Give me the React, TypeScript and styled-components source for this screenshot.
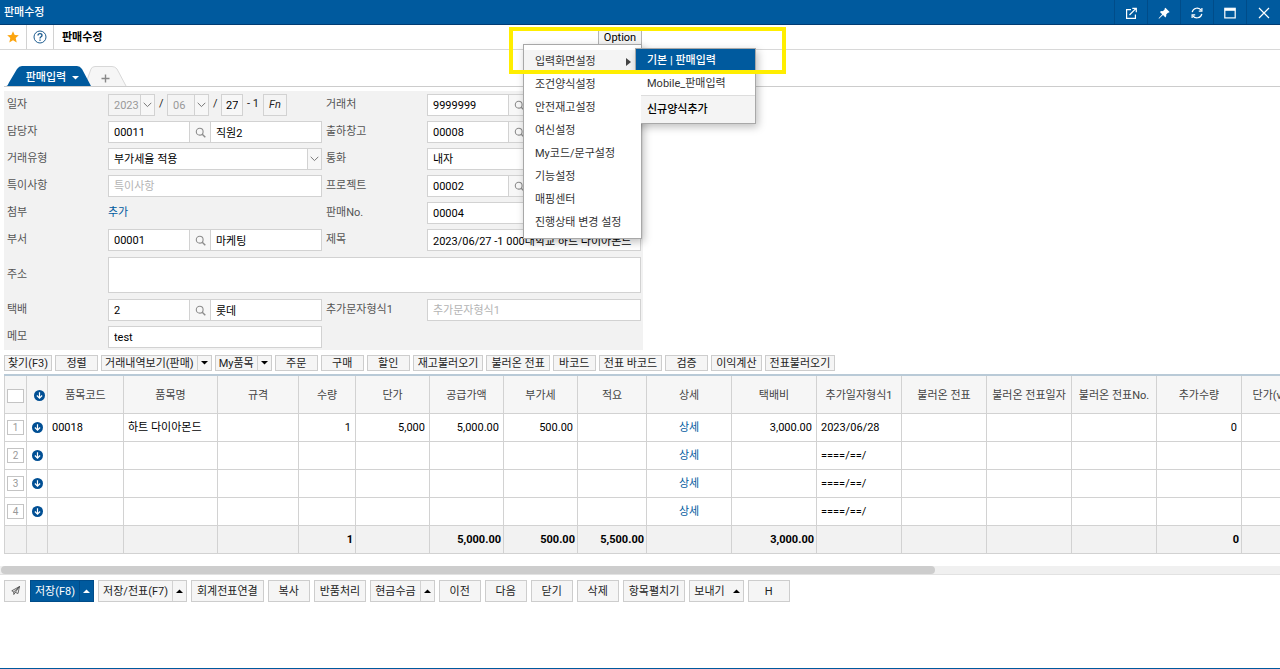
import React from 'react';
import styled, { createGlobalStyle, css } from 'styled-components';

const blue = '#005a9e';
const line = '#d2d2d2';

const GlobalStyle = createGlobalStyle`
  *, *::before, *::after { box-sizing: border-box; }
  body { margin: 0; background: #fff; }
  body, button, input, select, textarea {
    font-family: Roboto, 'Noto Sans CJK KR', sans-serif;
    font-size: 11px;
    line-height: 16px;
    color: #222;
  }
  button { margin: 0; padding: 0; cursor: pointer; }
  a { color: ${blue}; text-decoration: none; }
`;

const Page = styled.div`
  display: flex;
  flex-direction: column;
  min-height: 100vh;
  overflow: hidden;
  border-bottom: 1px solid ${blue};
`;

const TitleBar = styled.header`
  display: flex;
  align-items: center;
  justify-content: space-between;
  height: 25px;
  padding-left: 4px;
  background: ${blue};
  border-bottom: 1px solid #003c73;
  color: #fff;
  font-weight: 500;
`;

const WindowTitle = styled.span`
  padding-top: 1px;
`;

const WindowButtons = styled.div`
  display: flex;
  height: 100%;
`;

const WindowButton = styled.button`
  display: flex;
  align-items: center;
  justify-content: center;
  width: 33px;
  padding-top: 2px;
  border: 0;
  border-left: 1px solid #004c89;
  background: transparent;
  color: #fff;
  &:last-child { width: 34px; }
`;

const PageBar = styled.div`
  height: 25px;
  border-bottom: 1px solid #d8d8d8;
`;

const PageBarInner = styled.div`
  display: flex;
  align-items: stretch;
  width: 642px;
  height: 24px;
`;

const PageIcon = styled.button`
  display: flex;
  align-items: center;
  justify-content: center;
  width: 27px;
  border: 0;
  border-right: 1px solid ${line};
  background: transparent;
`;

const PageTitle = styled.h1`
  flex: 1;
  margin: 0;
  padding: 2px 0 0 8px;
  font-size: 11px;
  line-height: 22px;
  font-weight: 700;
  color: #000;
`;

const OptionHolder = styled.div`
  position: relative;
  padding-top: 5px;
`;

const OptionButton = styled.button`
  width: 44px;
  height: 15px;
  padding-top: 1px;
  border: 1px solid #b4b4b4;
  border-top-color: #e0e0e0;
  background: #f5f5f5;
  line-height: 12px;
  color: #000;
`;

const popup = css`
  position: absolute;
  border: 1px solid #a8a8a8;
  background: #fff;
  box-shadow: 2px 3px 8px rgba(0, 0, 0, 0.25);
  margin: 0;
  list-style: none;
`;

const Menu = styled.ul`
  ${popup}
  z-index: 2;
  top: 19px;
  right: 0;
  width: 119px;
  padding: 5px 0 4px;
`;

const SubMenu = styled.ul`
  ${popup}
  top: -2px;
  left: 111px;
  width: 121px;
  padding: 0;
`;

const MenuItem = styled.li<{ $open?: boolean }>`
  position: relative;
  background: ${(p) => (p.$open ? '#f4f4f4' : '#fff')};
`;

const MenuButton = styled.button<{ $kind?: 'active' | 'footer' }>`
  display: flex;
  align-items: center;
  justify-content: space-between;
  width: 100%;
  height: ${(p) => (p.$kind === 'footer' ? '28px' : '23px')};
  padding: 0 10px 0 11px;
  border: 0;
  background: transparent;
  color: #333;
  ${(p) => p.$kind === 'active' && css`background: ${blue}; color: #fff; font-weight: 500;`}
  ${(p) => p.$kind === 'footer' && css`border-top: 1px solid #ddd; background: #f4f4f4; color: #000; font-weight: 500;`}
`;

const Highlight = styled.div`
  position: absolute;
  z-index: 3;
  top: 2px;
  right: -144px;
  width: 277px;
  height: 47px;
  border: 4px solid #ffee00;
  pointer-events: none;
`;

const TabBar = styled.nav`
  display: flex;
  align-items: flex-end;
  height: 37px;
  margin: 0 0 4px 4px;
  padding-left: 2px;
  border-bottom: 1px solid #ccc;
`;

const Tab = styled.button<{ $active?: boolean }>`
  position: relative;
  display: flex;
  align-items: center;
  justify-content: center;
  gap: 6px;
  width: ${(p) => (p.$active ? '85px' : '44px')};
  height: 20px;
  margin-left: ${(p) => (p.$active ? '0' : '-8px')};
  padding: 4px 0 0 ${(p) => (p.$active ? '8px' : '0')};
  z-index: ${(p) => (p.$active ? 1 : 0)};
  border: 0;
  background: transparent;
  color: ${(p) => (p.$active ? '#fff' : '#888')};
  font-weight: ${(p) => (p.$active ? 500 : 400)};
`;

const TabShape = styled.svg`
  position: absolute;
  inset: 0;
  z-index: -1;
`;

const FormPanel = styled.form`
  display: grid;
  grid-template-columns: 101px 214px 105px 214px;
  row-gap: 5px;
  width: fit-content;
  margin-left: 4px;
  padding: 3px 2px 2px 3px;
  background: #f2f2f2;
`;

const Label = styled.label<{ $second?: boolean }>`
  align-self: center;
  padding-left: ${(p) => (p.$second ? '4px' : '0')};
  color: #555;
`;

const control = css`
  height: 22px;
  min-width: 0;
  border: 1px solid ${line};
  border-radius: 0;
  background: #fff;
  color: #000;
  padding: 0 5px;
  outline: 0;
`;

const TextInput = styled.input`
  ${control}
  width: 100%;
  &::placeholder { color: #b4b4b4; }
`;

const Address = styled.textarea`
  ${control}
  grid-column: span 3;
  height: 36px;
  margin: 1px 0;
  resize: none;
`;

const LookupBox = styled.div`
  display: grid;
  grid-template-columns: 82px 20px 1fr;
`;

const LookupButton = styled.button`
  display: flex;
  align-items: center;
  justify-content: center;
  border: 1px solid ${line};
  border-width: 1px 0;
  background: #f7f7f7;
`;

const SelectBox = styled.div<{ $width?: number; $muted?: boolean }>`
  position: relative;
  width: ${(p) => (p.$width ? `${p.$width}px` : '100%')};
  select {
    ${control}
    appearance: none;
    width: 100%;
    padding-top: 2px;
    opacity: 1;
    background: ${(p) => (p.$muted ? '#f4f4f4' : '#fff')};
    color: ${(p) => (p.$muted ? '#999' : '#000')};
  }
`;

const SelectArrow = styled.span`
  position: absolute;
  top: 1px;
  right: 1px;
  bottom: 1px;
  width: 14px;
  display: flex;
  align-items: center;
  justify-content: center;
  border-left: 1px solid ${line};
  background: #f7f7f7;
  pointer-events: none;
`;

const DateBox = styled.div`
  display: flex;
  gap: 4px;
`;

const DateMark = styled.span`
  width: 4px;
  padding-top: 2px;
  text-align: center;
`;

const DateSerial = styled.span`
  padding-top: 2px;
`;

const DayInput = styled.input`
  ${control}
  width: 22px;
  padding: 0 4px;
  background: #f7f7f7;
`;

const FnButton = styled.button`
  width: 24px;
  height: 22px;
  border: 1px solid ${line};
  background: #f4f4f4;
  font-style: italic;
`;

const AddLink = styled.a`
  align-self: center;
`;

const ToolRow = styled.div<{ $tall?: boolean }>`
  display: flex;
  gap: ${(p) => (p.$tall ? '4px' : '3px')};
  margin: ${(p) => (p.$tall ? '5px 0 0 4px' : '5px 0 3px 4px')};
`;

const ToolGroup = styled.div<{ $tall?: boolean; $primary?: boolean }>`
  display: flex;
  height: ${(p) => (p.$tall ? '22px' : '16px')};
  border: 1px solid ${(p) => (p.$primary ? '#004c89' : '#cdcdcd')};
  background: ${(p) => (p.$primary ? blue : '#f5f5f5')};
`;

const ToolButton = styled.button<{ $tall?: boolean; $primary?: boolean; $tight?: boolean }>`
  min-width: ${(p) => (p.$tight ? '0' : p.$tall ? '40px' : '41px')};
  padding: 1px ${(p) => (p.$tall ? (p.$tight ? '4px' : '5px') : p.$tight ? '3px' : '4px')} 0;
  border: 0;
  background: transparent;
  line-height: 13px;
  white-space: nowrap;
  color: ${(p) => (p.$primary ? '#fff' : '#222')};
`;

const ArrowButton = styled.button<{ $primary?: boolean; $plain?: boolean }>`
  display: flex;
  align-items: center;
  justify-content: center;
  width: 14px;
  border: 0;
  border-left: 1px solid ${(p) => (p.$plain ? 'transparent' : p.$primary ? '#004c89' : line)};
  background: transparent;
`;

const SendButton = styled.button`
  display: flex;
  align-items: center;
  justify-content: center;
  width: 20px;
  border: 0;
  background: transparent;
`;

const GridArea = styled.div`
  margin-left: 4px;
  overflow: hidden;
`;

const Grid = styled.table`
  table-layout: fixed;
  width: 0;
  border-collapse: collapse;
  th, td {
    height: 28px;
    padding: 2px 4px 0;
    border: 1px solid ${line};
    font-weight: 400;
    white-space: nowrap;
    color: #000;
  }
  thead th {
    height: 38px;
    padding: 3px 0 0;
    border-top: 2px solid #b9cad7;
    background: #f6f6f6;
    color: #444;
  }
  tfoot td {
    background: #f2f2f2;
    padding: 1px 2px 0;
    font-weight: 700;
  }
`;

const Cell = styled.td<{ $align?: 'left' | 'right' | 'center' }>`
  text-align: ${(p) => p.$align ?? 'left'};
`;

const IconCell = styled.td`
  && { padding: 0 2px; }
  line-height: 0;
`;

const SelectAll = styled.input`
  appearance: none;
  display: block;
  width: 17px;
  height: 14px;
  margin: 0 0 0 2px;
  border: 1px solid #c4c4c4;
  background: #fff;
`;

const RowNumber = styled.button`
  display: block;
  width: 17px;
  height: 15px;
  border: 1px solid #c4c4c4;
  background: #fff;
  font-size: 10px;
  line-height: 13px;
  color: #999;
`;

const RoundButton = styled.button<{ $header?: boolean }>`
  display: flex;
  justify-content: center;
  width: 16px;
  margin-left: ${(p) => (p.$header ? 'auto' : '0')};
  border: 0;
  background: transparent;
`;

const ScrollTrack = styled.div`
  height: 9px;
  margin-top: 12px;
  border-bottom: 1px solid #e2e2e2;
  background: #f0f0f0;
`;

const ScrollThumb = styled.div`
  width: 73%;
  height: 8px;
  margin-left: 1px;
  border-radius: 4px;
  background: #cdcdcd;
`;

const Search = () => (
  <svg width="11" height="11" viewBox="0 0 11 11" fill="none" stroke="#8c8c8c" strokeWidth="1.1">
    <circle cx="4.7" cy="4.7" r="3.4" />
    <path d="M7.2 7.2 10.3 10.3" strokeWidth="1.4" />
  </svg>
);

const Chevron = () => (
  <svg width="9" height="6" viewBox="0 0 9 6" fill="none" stroke="#777" strokeWidth="1">
    <path d="M.7.8 4.5 4.6 8.3.8" />
  </svg>
);

const Triangle = ({ up, color = '#000' }: { up?: boolean; color?: string }) => (
  <svg width="7" height="4" viewBox="0 0 7 4" fill={color}>
    <path d={up ? 'M0 4 3.5 .5 7 4Z' : 'M0 0H7L3.5 3.5Z'} />
  </svg>
);

const DownCircle = () => (
  <svg width="11" height="11" viewBox="0 0 11 11">
    <circle cx="5.5" cy="5.5" r="5.5" fill="#004f94" />
    <path d="M5.5 2.2V8M2.9 5.5 5.5 8.1 8.1 5.5" fill="none" stroke="#fff" strokeWidth="1.2" />
  </svg>
);

const windowIcons: { name: string; icon: React.ReactNode }[] = [
  {
    name: '새 창',
    icon: (
      <g fill="none" stroke="currentColor" strokeWidth="1.2">
        <path d="M6 2.6H1.6V11.4H10.4V7.5" />
        <path d="M4.5 8 10.8 1.7M7.3 1.3H11.3V5.3" />
      </g>
    ),
  },
  {
    name: '고정',
    icon: (
      <path
        d="M7.4.8 11.6 5 10.8 5.8 10.2 5.6 8.2 7.6C8.5 8.8 8.2 9.8 7.4 10.4L5 8 1 11.7.6 11.3 4.2 7.2 1.9 4.9C2.7 4.1 3.7 3.9 4.8 4.2L6.8 2.2 6.6 1.6Z"
        fill="currentColor"
      />
    ),
  },
  {
    name: '새로고침',
    icon: (
      <g fill="none" stroke="currentColor" strokeWidth="1.2">
        <path d="M1.2 5.2A5 5 0 0 1 10.3 3.4M10.8 6.8A5 5 0 0 1 1.7 8.6" />
        <path d="M10.9.9V4.1H7.8M1.1 11.1V7.9H4.2" />
      </g>
    ),
  },
  {
    name: '최대화',
    icon: (
      <g fill="none" stroke="currentColor" strokeWidth="1.2">
        <rect x=".8" y="1.3" width="10.4" height="9.6" />
        <path d="M.8 2.6H11.2" strokeWidth="2.4" />
      </g>
    ),
  },
  {
    name: '닫기',
    icon: <path d="M1 1 11 11M11 1 1 11" fill="none" stroke="currentColor" strokeWidth="1.2" />,
  },
];

const menuItems = ['조건양식설정', '안전재고설정', '여신설정', 'My코드/문구설정', '기능설정', '매핑센터', '진행상태 변경 설정'];

const gridTools: { text: string; arrow?: boolean; tight?: boolean }[] = [
  { text: '찾기(F3)', tight: true },
  { text: '정렬' },
  { text: '거래내역보기(판매)', arrow: true },
  { text: 'My품목', arrow: true },
  { text: '주문' },
  { text: '구매' },
  { text: '할인' },
  { text: '재고불러오기' },
  { text: '불러온 전표' },
  { text: '바코드' },
  { text: '전표 바코드' },
  { text: '검증' },
  { text: '이익계산' },
  { text: '전표불러오기' },
];

const actions: { text: string; arrow?: boolean; primary?: boolean; plain?: boolean }[] = [
  { text: '저장(F8)', arrow: true, primary: true },
  { text: '저장/전표(F7)', arrow: true },
  { text: '회계전표연결' },
  { text: '복사' },
  { text: '반품처리' },
  { text: '현금수금', arrow: true },
  { text: '이전' },
  { text: '다음' },
  { text: '닫기' },
  { text: '삭제' },
  { text: '항목펼치기' },
  { text: '보내기', arrow: true, plain: true },
  { text: 'H' },
];

type Column = { title: string; width: number; align?: 'right' | 'center'; total?: string };

const columns: Column[] = [
  { title: '품목코드', width: 76 },
  { title: '품목명', width: 94 },
  { title: '규격', width: 81 },
  { title: '수량', width: 57, align: 'right', total: '1' },
  { title: '단가', width: 74, align: 'right' },
  { title: '공급가액', width: 74, align: 'right', total: '5,000.00' },
  { title: '부가세', width: 74, align: 'right', total: '500.00' },
  { title: '적요', width: 69, total: '5,500.00' },
  { title: '상세', width: 85, align: 'center' },
  { title: '택배비', width: 85, align: 'right', total: '3,000.00' },
  { title: '추가일자형식1', width: 85 },
  { title: '불러온 전표', width: 85 },
  { title: '불러온 전표일자', width: 85 },
  { title: '불러온 전표No.', width: 85 },
  { title: '추가수량', width: 85, align: 'right', total: '0' },
  { title: '단가(vat포함)', width: 85, align: 'right' },
];

const emptyRow = ['', '', '', '', '', '', '', '', '상세', '', '====/==/', '', '', '', '', ''];
const rows = [
  ['00018', '하트 다이아몬드', '', '1', '5,000', '5,000.00', '500.00', '', '상세', '3,000.00', '2023/06/28', '', '', '', '0', ''],
  emptyRow,
  emptyRow,
  emptyRow,
];

const Lookup = ({ id, code, name }: { id: string; code: string; name: string }) => (
  <LookupBox>
    <TextInput id={id} defaultValue={code} />
    <LookupButton type="button" aria-label="검색"><Search /></LookupButton>
    <TextInput aria-label="이름" defaultValue={name} />
  </LookupBox>
);

const Select = ({ id, value, width, muted }: { id: string; value: string; width?: number; muted?: boolean }) => (
  <SelectBox $width={width} $muted={muted}>
    <select id={id} aria-label={muted ? id : undefined} disabled={muted} defaultValue={value}>
      <option>{value}</option>
    </select>
    <SelectArrow><Chevron /></SelectArrow>
  </SelectBox>
);

const OptionMenu = () => (
  <OptionHolder>
    <OptionButton type="button" aria-expanded="true">Option</OptionButton>
    <Menu>
      <MenuItem $open>
        <MenuButton type="button">
          입력화면설정
          <svg width="5" height="8" viewBox="0 0 5 8" fill="#444"><path d="M0 0 5 4 0 8Z" /></svg>
        </MenuButton>
        <SubMenu>
          <MenuItem><MenuButton type="button" $kind="active">기본 | 판매입력</MenuButton></MenuItem>
          <MenuItem><MenuButton type="button">Mobile_판매입력</MenuButton></MenuItem>
          <MenuItem><MenuButton type="button" $kind="footer">신규양식추가</MenuButton></MenuItem>
        </SubMenu>
      </MenuItem>
      {menuItems.map((text) => (
        <MenuItem key={text}><MenuButton type="button">{text}</MenuButton></MenuItem>
      ))}
    </Menu>
    <Highlight />
  </OptionHolder>
);

export default function App() {
  return (
    <Page>
      <GlobalStyle />
      <TitleBar>
        <WindowTitle>판매수정</WindowTitle>
        <WindowButtons>
          {windowIcons.map(({ name, icon }) => (
            <WindowButton key={name} type="button" aria-label={name}>
              <svg width="12" height="12" viewBox="0 0 12 12">{icon}</svg>
            </WindowButton>
          ))}
        </WindowButtons>
      </TitleBar>

      <PageBar>
        <PageBarInner>
          <PageIcon type="button" aria-label="즐겨찾기">
            <svg width="12" height="12" viewBox="0 0 12 12" fill="#fca510">
              <path d="M6 .2 7.7 4 11.8 4.3 8.7 7.1 9.7 11.4 6 9.2 2.3 11.4 3.3 7.1.2 4.3 4.3 4Z" />
            </svg>
          </PageIcon>
          <PageIcon type="button" aria-label="도움말">
            <svg width="14" height="14" viewBox="0 0 14 14" fill="none" stroke="#1d5c8f">
              <circle cx="7" cy="7" r="6" strokeWidth="1" />
              <path d="M5 5.6C5 4.3 5.9 3.7 7 3.7S9 4.4 9 5.4C9 6.7 7 6.8 7 8.4" strokeWidth="1.3" />
              <path d="M7 9.5V10.8" strokeWidth="1.4" />
            </svg>
          </PageIcon>
          <PageTitle>판매수정</PageTitle>
          <OptionMenu />
        </PageBarInner>
      </PageBar>

      <TabBar>
        <Tab type="button" $active>
          <TabShape width="85" height="20" viewBox="0 0 85 20">
            <path d="M0 20C2 20 2 18 3 16.500L11 3Q13 0 16 0H71Q74 0 76 3L85 20Z" fill={blue} />
          </TabShape>
          판매입력
          <Triangle color="#fff" />
        </Tab>
        <Tab type="button" aria-label="양식 추가">
          <TabShape width="44" height="20" viewBox="0 0 44 20">
            <path d="M2 20 8 3Q9 .5 12 .5H29Q32 .5 34 3L43 20" fill="#f6f6f6" stroke="#d8d8d8" />
          </TabShape>
          <svg width="9" height="9" viewBox="0 0 9 9" stroke="#888" strokeWidth="1.4"><path d="M4.500 .5V8.500M.5 4.500H8.500" /></svg>
        </Tab>
      </TabBar>

      <FormPanel onSubmit={(e) => e.preventDefault()}>
        <Label htmlFor="day">일자</Label>
        <DateBox>
          <Select id="year" value="2023" width={47} muted />
          <DateMark>/</DateMark>
          <Select id="month" value="06" width={42} muted />
          <DateMark>/</DateMark>
          <DayInput id="day" defaultValue="27" />
          <DateSerial>- 1</DateSerial>
          <FnButton type="button">Fn</FnButton>
        </DateBox>
        <Label $second htmlFor="customer">거래처</Label>
        <Lookup id="customer" code="9999999" name="" />

        <Label htmlFor="manager">담당자</Label>
        <Lookup id="manager" code="00011" name="직원2" />
        <Label $second htmlFor="warehouse">출하창고</Label>
        <Lookup id="warehouse" code="00008" name="" />

        <Label htmlFor="type">거래유형</Label>
        <Select id="type" value="부가세율 적용" />
        <Label $second htmlFor="currency">통화</Label>
        <Select id="currency" value="내자" />

        <Label htmlFor="remark">특이사항</Label>
        <TextInput id="remark" placeholder="특이사항" />
        <Label $second htmlFor="project">프로젝트</Label>
        <Lookup id="project" code="00002" name="" />

        <Label as="span">첨부</Label>
        <AddLink href="#">추가</AddLink>
        <Label $second htmlFor="saleNo">판매No.</Label>
        <TextInput id="saleNo" defaultValue="00004" />

        <Label htmlFor="dept">부서</Label>
        <Lookup id="dept" code="00001" name="마케팅" />
        <Label $second htmlFor="subject">제목</Label>
        <TextInput id="subject" defaultValue="2023/06/27 -1 000대학교 하트 다이아몬드" />

        <Label htmlFor="address">주소</Label>
        <Address id="address" />

        <Label htmlFor="courier">택배</Label>
        <Lookup id="courier" code="2" name="롯데" />
        <Label $second htmlFor="extra">추가문자형식1</Label>
        <TextInput id="extra" placeholder="추가문자형식1" />

        <Label htmlFor="memo">메모</Label>
        <TextInput id="memo" defaultValue="test" />
      </FormPanel>

      <ToolRow>
        {gridTools.map(({ text, arrow, tight }) => (
          <ToolGroup key={text}>
            <ToolButton type="button" $tight={arrow || tight}>{text}</ToolButton>
            {arrow && <ArrowButton type="button" aria-label={`${text} 더보기`}><Triangle /></ArrowButton>}
          </ToolGroup>
        ))}
      </ToolRow>

      <GridArea>
        <Grid>
          <colgroup>
            <col width={22} />
            <col width={21} />
            {columns.map((c) => <col key={c.title} width={c.width} />)}
          </colgroup>
          <thead>
            <tr>
              <th><SelectAll type="checkbox" aria-label="전체 선택" /></th>
              <th><RoundButton type="button" $header aria-label="전체 행 추가"><DownCircle /></RoundButton></th>
              {columns.map((c) => <th key={c.title}>{c.title}</th>)}
            </tr>
          </thead>
          <tbody>
            {rows.map((row, r) => (
              <tr key={r}>
                <IconCell><RowNumber type="button">{r + 1}</RowNumber></IconCell>
                <IconCell><RoundButton type="button" aria-label="행 추가"><DownCircle /></RoundButton></IconCell>
                {row.map((value, i) => (
                  <Cell key={i} $align={columns[i].align}>
                    {value === '상세' ? <a href="#">{value}</a> : value}
                  </Cell>
                ))}
              </tr>
            ))}
          </tbody>
          <tfoot>
            <tr>
              <td />
              <td />
              {columns.map((c) => <Cell key={c.title} $align="right">{c.total}</Cell>)}
            </tr>
          </tfoot>
        </Grid>
      </GridArea>

      <ScrollTrack><ScrollThumb /></ScrollTrack>

      <ToolRow $tall>
        <ToolGroup $tall>
          <SendButton type="button" aria-label="보내기">
            <svg width="9" height="9" viewBox="0 0 9 9" fill="none" stroke="#444" strokeWidth=".8">
              <path d="M8.500.5.8 4.800 2.800 5.900 8.500.5 7 7.500 4.300 6.400 8.500.5M2.800 5.900V8.500L4.300 6.400" />
            </svg>
          </SendButton>
        </ToolGroup>
        {actions.map(({ text, arrow, primary, plain }) => (
          <ToolGroup key={text} $tall $primary={primary}>
            <ToolButton type="button" $tall $tight={arrow} $primary={primary}>{text}</ToolButton>
            {arrow && (
              <ArrowButton type="button" aria-label={`${text} 더보기`} $primary={primary} $plain={plain}>
                <Triangle up color={primary ? '#fff' : '#000'} />
              </ArrowButton>
            )}
          </ToolGroup>
        ))}
      </ToolRow>
    </Page>
  );
}
